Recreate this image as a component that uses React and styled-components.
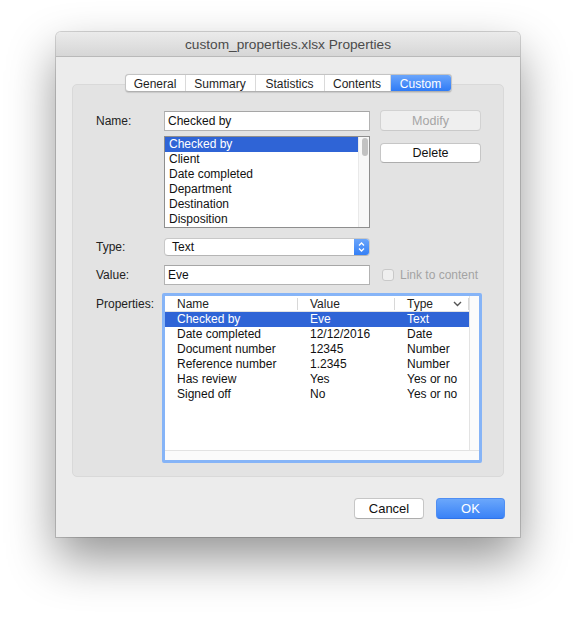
import React from 'react';
import styled, { createGlobalStyle } from 'styled-components';

const GlobalStyle = createGlobalStyle`
  html, body {
    margin: 0;
    background: #ffffff;
    font-family: "Liberation Sans", Arial, sans-serif;
    color: #1e1e1e;
  }
  * { box-sizing: border-box; }
`;

const tabs = [
  { label: 'General', width: 59 },
  { label: 'Summary', width: 70 },
  { label: 'Statistics', width: 69 },
  { label: 'Contents', width: 66 },
  { label: 'Custom', width: 61, active: true },
];

const names = ['Checked by', 'Client', 'Date completed', 'Department', 'Destination', 'Disposition'];

const properties = [
  { name: 'Checked by', value: 'Eve', type: 'Text' },
  { name: 'Date completed', value: '12/12/2016', type: 'Date' },
  { name: 'Document number', value: '12345', type: 'Number' },
  { name: 'Reference number', value: '1.2345', type: 'Number' },
  { name: 'Has review', value: 'Yes', type: 'Yes or no' },
  { name: 'Signed off', value: 'No', type: 'Yes or no' },
];

const columns = [
  { label: 'Name', width: 133 },
  { label: 'Value', width: 97 },
  { label: 'Type', width: 74, sort: true },
];

const Page = styled.div`
  padding: 32px 0 80px 56px;
`;

const Window = styled.div`
  width: 464px;
  height: 505px;
  background: #ececec;
  border-radius: 5px 5px 0 0;
  box-shadow: 0 0 0 1px rgba(0, 0, 0, 0.16), 0 22px 48px rgba(0, 0, 0, 0.42);
  display: flex;
  flex-direction: column;
`;

const TitleBar = styled.div`
  height: 25px;
  flex: none;
  border-radius: 5px 5px 0 0;
  background: linear-gradient(#ebebeb, #d6d6d6);
  border-bottom: 1px solid #b9b9b9;
  display: flex;
  align-items: center;
  justify-content: center;
  font-size: 13.7px;
  color: #4b4b4b;
`;

const Body = styled.div`
  flex: 1;
  padding: 17px 16px 0;
  display: flex;
  flex-direction: column;
`;

const TabStrip = styled.div`
  position: relative;
  z-index: 1;
  align-self: center;
  display: flex;
  height: 18px;
  margin-bottom: -8px;
  background: #ffffff;
  border: 1px solid #c4c4c4;
  border-bottom-color: #b0b0b0;
  border-radius: 4px;
  overflow: hidden;
  box-shadow: 0 0.5px 1px rgba(0, 0, 0, 0.12);
`;

const Tab = styled.div`
  width: ${p => p.$width}px;
  display: flex;
  align-items: center;
  justify-content: center;
  padding-top: 1px;
  font-size: 12px;
  color: ${p => (p.$active ? '#ffffff' : '#1e1e1e')};
  background: ${p => (p.$active ? 'linear-gradient(#6aa5fb, #2f7bf6)' : 'transparent')};
  border-left: 1px solid #dadada;
  &:first-child { border-left: none; }
`;

const Panel = styled.div`
  height: 393px;
  flex: none;
  background: #e3e3e3;
  border: 1px solid #d9d9d9;
  border-radius: 5px;
  padding: 25px 0 0 23px;
  display: flex;
  flex-direction: column;
`;

const Row = styled.div`
  display: flex;
  align-items: ${p => (p.$top ? 'flex-start' : 'center')};
  margin-top: ${p => p.$mt || 0}px;
`;

const Label = styled.div`
  width: 68px;
  flex: none;
  font-size: 12px;
  color: #222;
  padding-top: ${p => p.$pt || 0}px;
`;

const TextField = styled.div`
  width: 206px;
  height: 20px;
  background: #ffffff;
  border: 1px solid #b3b3b3;
  border-top-color: #a6a6a6;
  font-size: 12px;
  line-height: 18px;
  padding-left: 3px;
  color: #111;
`;

const PushButton = styled.div`
  width: 101px;
  height: ${p => p.$h || 20}px;
  margin-left: 10px;
  margin-top: ${p => p.$mt || 0}px;
  border-radius: 4px;
  display: flex;
  align-items: center;
  justify-content: center;
  font-size: 12.5px;
  color: ${p => (p.$disabled ? '#a5a5a5' : '#111')};
  background: ${p => (p.$disabled ? '#efefef' : '#ffffff')};
  border: 1px solid ${p => (p.$disabled ? '#d2d2d2' : '#c6c6c6')};
  border-bottom-color: ${p => (p.$disabled ? '#cacaca' : '#adadad')};
`;

const ListBox = styled.div`
  width: 206px;
  height: 92px;
  background: #ffffff;
  border: 1px solid #8e8e8e;
  display: flex;
`;

const ListItems = styled.div`
  flex: 1;
`;

const ListItem = styled.div`
  height: 15px;
  line-height: 15px;
  font-size: 12px;
  padding-left: 4px;
  color: ${p => (p.$selected ? '#ffffff' : '#111')};
  background: ${p => (p.$selected ? '#2f64d6' : 'transparent')};
`;

const ScrollTrack = styled.div`
  width: 11px;
  flex: none;
  background: #f8f8f8;
  border-left: 1px solid #e9e9e9;
  padding: 1px 0 0 3px;
`;

const ScrollThumb = styled.div`
  width: 6px;
  height: 18px;
  border-radius: 3px;
  background: #c2c2c2;
`;

const Select = styled.div`
  width: 206px;
  height: 18px;
  display: flex;
  background: #ffffff;
  border: 1px solid #c8c8c8;
  border-bottom-color: #b5b5b5;
  border-radius: 4px;
  overflow: hidden;
`;

const SelectText = styled.div`
  flex: 1;
  font-size: 12px;
  line-height: 16px;
  padding-left: 7px;
  color: #111;
`;

const SelectArrows = styled.div`
  width: 15px;
  flex: none;
  background: linear-gradient(#6aa5fb, #3580f6);
  display: flex;
  align-items: center;
  justify-content: center;
`;

const CheckRow = styled.div`
  display: flex;
  align-items: center;
  margin-left: 12px;
  font-size: 12px;
  color: #a3a3a3;
`;

const CheckBox = styled.div`
  width: 12px;
  height: 12px;
  margin-right: 6px;
  border: 1px solid #c9c9c9;
  border-radius: 3px;
  background: #efefef;
`;

const TableFrame = styled.div`
  width: 320px;
  height: 170px;
  margin-left: -2px;
  border: 3px solid #86b4f7;
  border-radius: 2px;
  background: #ffffff;
  display: flex;
  flex-direction: column;
`;

const TableMain = styled.div`
  flex: 1;
  display: flex;
`;

const TableContent = styled.div`
  flex: 1;
`;

const HeaderRow = styled.div`
  height: 16px;
  display: flex;
  align-items: center;
  border-bottom: 1px solid #e2e2e2;
`;

const HeaderCell = styled.div`
  width: ${p => p.$width}px;
  height: 12px;
  line-height: 12px;
  font-size: 12px;
  padding-left: 12px;
  padding-right: 6px;
  color: #222;
  border-right: 1px solid #d8d8d8;
  display: flex;
  align-items: center;
  justify-content: space-between;
`;

const DataRow = styled.div`
  height: 15px;
  display: flex;
  background: ${p => (p.$selected ? '#2f64d6' : 'transparent')};
  color: ${p => (p.$selected ? '#ffffff' : '#111')};
`;

const DataCell = styled.div`
  width: ${p => p.$width}px;
  font-size: 12px;
  line-height: 15px;
  padding-left: 12px;
  white-space: nowrap;
`;

const VTrack = styled.div`
  width: 10px;
  flex: none;
  background: #fbfbfb;
  border-left: 1px solid #e3e3e3;
`;

const HTrack = styled.div`
  height: 10px;
  flex: none;
  background: #fbfbfb;
  border-top: 1px solid #e3e3e3;
`;

const Footer = styled.div`
  display: flex;
  justify-content: flex-end;
  gap: 12px;
  margin-top: 21px;
  margin-right: -1px;
`;

const DialogButton = styled.div`
  width: ${p => p.$width}px;
  height: 21px;
  border-radius: 4px;
  display: flex;
  align-items: center;
  justify-content: center;
  font-size: 13px;
  color: ${p => (p.$primary ? '#ffffff' : '#111')};
  background: ${p => (p.$primary ? 'linear-gradient(#6aa7fb, #3a82f7)' : '#ffffff')};
  border: 1px solid ${p => (p.$primary ? '#4f8ef3' : '#c6c6c6')};
  border-bottom-color: ${p => (p.$primary ? '#2f72e8' : '#adadad')};
`;

const UpDown = () => (
  <svg width="7" height="10" viewBox="0 0 7 10">
    <path d="M1 3.5 L3.5 1 L6 3.5 M1 6.5 L3.5 9 L6 6.5" fill="none" stroke="#fff" strokeWidth="1.3" />
  </svg>
);

const Chevron = () => (
  <svg width="9" height="6" viewBox="0 0 9 6">
    <path d="M1 1 L4.5 4.5 L8 1" fill="none" stroke="#555" strokeWidth="1.4" />
  </svg>
);

export default function App() {
  return (
    <Page>
      <GlobalStyle />
      <Window>
        <TitleBar>custom_properties.xlsx Properties</TitleBar>
        <Body>
          <TabStrip>
            {tabs.map(t => (
              <Tab key={t.label} $width={t.width} $active={t.active}>{t.label}</Tab>
            ))}
          </TabStrip>
          <Panel>
            <Row>
              <Label>Name:</Label>
              <TextField>Checked by</TextField>
              <PushButton $disabled $h={21}>Modify</PushButton>
            </Row>
            <Row $top $mt={5}>
              <Label />
              <ListBox>
                <ListItems>
                  {names.map((n, i) => (
                    <ListItem key={n} $selected={i === 0}>{n}</ListItem>
                  ))}
                </ListItems>
                <ScrollTrack>
                  <ScrollThumb />
                </ScrollTrack>
              </ListBox>
              <PushButton $mt={7}>Delete</PushButton>
            </Row>
            <Row $mt={10}>
              <Label>Type:</Label>
              <Select>
                <SelectText>Text</SelectText>
                <SelectArrows><UpDown /></SelectArrows>
              </Select>
            </Row>
            <Row $mt={9}>
              <Label>Value:</Label>
              <TextField>Eve</TextField>
              <CheckRow>
                <CheckBox />
                Link to content
              </CheckRow>
            </Row>
            <Row $top $mt={8}>
              <Label $pt={4}>Properties:</Label>
              <TableFrame>
                <TableMain>
                  <TableContent>
                    <HeaderRow>
                      {columns.map(c => (
                        <HeaderCell key={c.label} $width={c.width}>
                          {c.label}
                          {c.sort && <Chevron />}
                        </HeaderCell>
                      ))}
                    </HeaderRow>
                    {properties.map((p, i) => (
                      <DataRow key={p.name} $selected={i === 0}>
                        <DataCell $width={columns[0].width}>{p.name}</DataCell>
                        <DataCell $width={columns[1].width}>{p.value}</DataCell>
                        <DataCell $width={columns[2].width}>{p.type}</DataCell>
                      </DataRow>
                    ))}
                  </TableContent>
                  <VTrack />
                </TableMain>
                <HTrack />
              </TableFrame>
            </Row>
          </Panel>
          <Footer>
            <DialogButton $width={70}>Cancel</DialogButton>
            <DialogButton $width={69} $primary>OK</DialogButton>
          </Footer>
        </Body>
      </Window>
    </Page>
  );
}
